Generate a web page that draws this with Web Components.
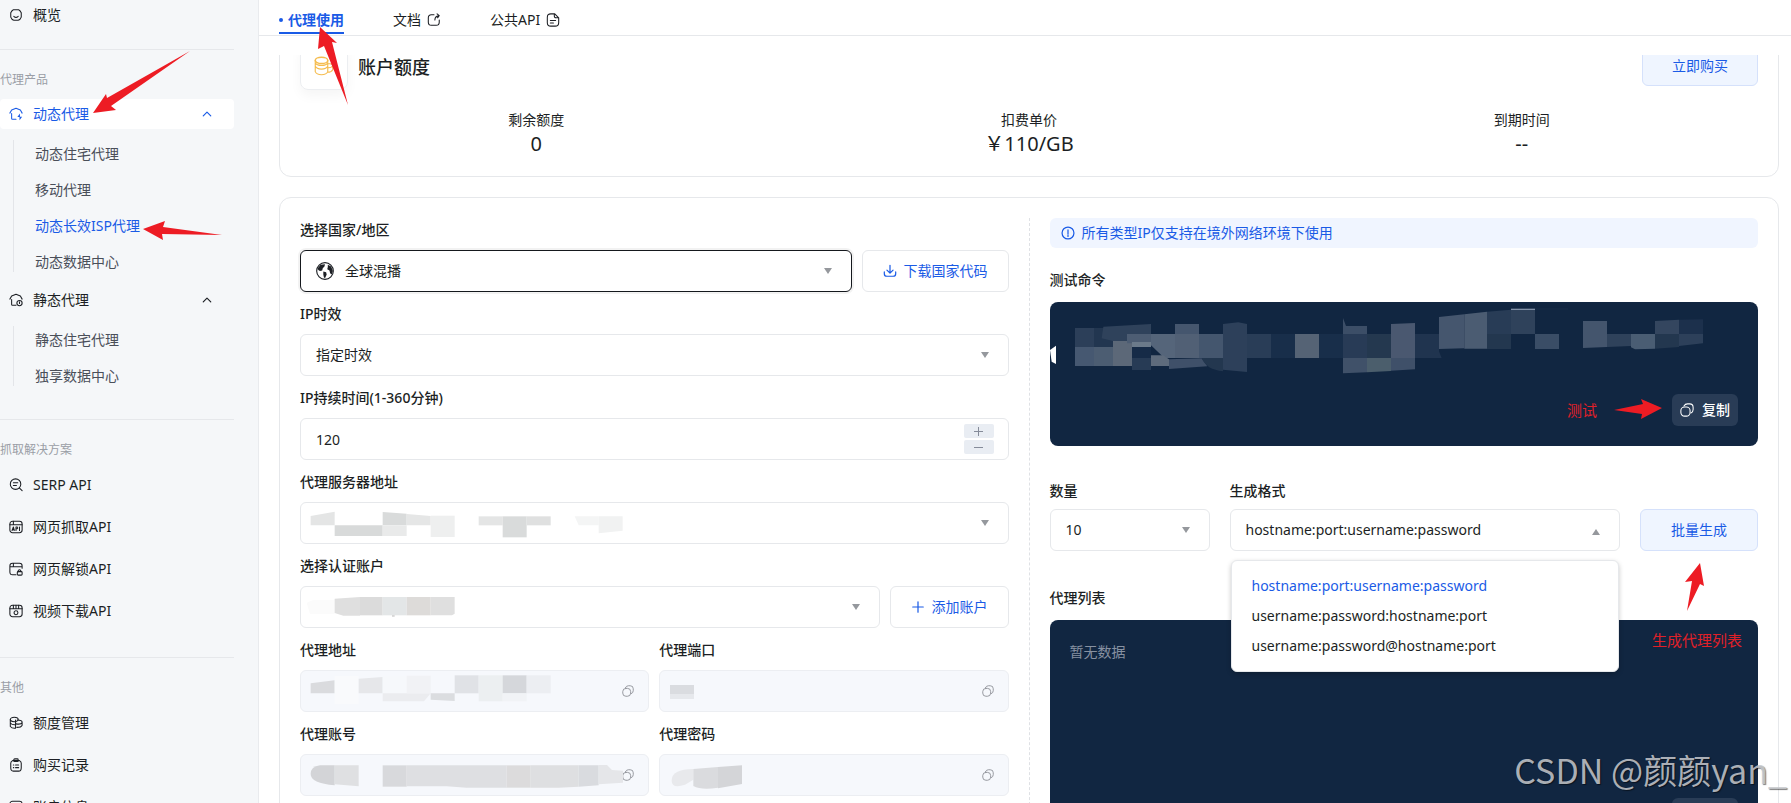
<!DOCTYPE html>
<html lang="zh-CN">
<head>
<meta charset="utf-8">
<meta name="viewport" content="width=device-width, initial-scale=1">
<title>动态长效ISP代理</title>
<style>
  html {
    --blue: #1a5be6;
    --text: #1c1f24;
    --muted: #9a9ea6;
    --line: #e6e8eb;
    --panel: #112641;
    --note: #e02028;
  }

  body {
    margin: 0;
    color: var(--text);
    font: 14px/24px "Noto Sans", "Noto Sans CJK SC", sans-serif;
    overflow: hidden;
  }
</style>
</head>
<body>
<app-shell>
  <side-nav slot="nav">
    <nav-section compact>
      <nav-item icon="home">概览</nav-item>
    </nav-section>
    <nav-section caption="代理产品">
      <nav-group icon="dynamic" heading="动态代理" active>
        <nav-item sub>动态住宅代理</nav-item>
        <nav-item sub>移动代理</nav-item>
        <nav-item sub current>动态长效ISP代理</nav-item>
        <nav-item sub>动态数据中心</nav-item>
      </nav-group>
      <nav-group icon="static" heading="静态代理">
        <nav-item sub>静态住宅代理</nav-item>
        <nav-item sub>独享数据中心</nav-item>
      </nav-group>
    </nav-section>
    <nav-section caption="抓取解决方案">
      <nav-item icon="serp">SERP API</nav-item>
      <nav-item icon="scrape">网页抓取API</nav-item>
      <nav-item icon="unlock">网页解锁API</nav-item>
      <nav-item icon="video">视频下载API</nav-item>
    </nav-section>
    <nav-section caption="其他">
      <nav-item icon="coins">额度管理</nav-item>
      <nav-item icon="order">购买记录</nav-item>
      <nav-item icon="user">账户信息</nav-item>
    </nav-section>
  </side-nav>
  <tab-bar slot="tabs"></tab-bar>
  <quota-card>
    <quota-stat label="剩余额度">0</quota-stat>
    <quota-stat label="扣费单价">￥110/GB</quota-stat>
    <quota-stat label="到期时间">--</quota-stat>
  </quota-card>
  <work-card>
    <field-select label="选择国家/地区" value="全球混播" icon="globe" focused>
      <ui-button slot="aside" kind="plain" icon="download">下载国家代码</ui-button>
    </field-select>
    <field-select label="IP时效" value="指定时效"></field-select>
    <field-number label="IP持续时间(1-360分钟)" value="120"></field-number>
    <field-select label="代理服务器地址" mask="server"></field-select>
    <field-select label="选择认证账户" mask="account">
      <ui-button slot="aside" kind="plain" icon="plus">添加账户</ui-button>
    </field-select>
    <field-pair>
      <field-copy label="代理地址" mask="host"></field-copy>
      <field-copy label="代理端口" mask="port"></field-copy>
      <field-copy label="代理账号" mask="user"></field-copy>
      <field-copy label="代理密码" mask="pass"></field-copy>
    </field-pair>
    <info-banner slot="right">所有类型IP仅支持在境外网络环境下使用</info-banner>
    <code-panel slot="right" heading="测试命令" masked>
      <hand-note slot="note">测试</hand-note>
    </code-panel>
    <generate-row slot="right"></generate-row>
    <code-panel slot="right" heading="代理列表" tall empty="暂无数据">
      <hand-note slot="note" corner>生成代理列表</hand-note>
    </code-panel>
  </work-card>
</app-shell>
<hand-arrows></hand-arrows>
<water-mark>CSDN @颜颜yan_</water-mark>

<script>
const icons = {
  home: '<path d="M5 2h6q1.500.5 3 3.500v5q-1 3-3.500 3.500h-5Q3 13.500 2 10.500v-5Q3.500 2.500 5 2z"/><path d="M5.500 9.500q2.500 2.500 5 0"/>',
  dynamic: '<path d="M1 7l2-3.500L8 1.500l5 2L15 7M3 7.500V13q0 1 1 1h4"/><path d="M12.500 7.500l-3 4h2.500v3.500l3-4h-2.500z" fill="currentColor" stroke="none"/>',
  static: '<path d="M1 7l2-3.500L8 1.500l5 2L15 7M3 7.500V13q0 1 1 1h4"/><circle cx="12" cy="11.500" r="3"/><path d="M12 10v2"/>',
  serp: '<circle cx="7.500" cy="7" r="6"/><path d="M12 11.500l3 3M5 5.500h5M5 8.500h3.500"/>',
  scrape: '<rect x="1" y="1.500" width="14" height="13" rx="3"/><path d="M1 5.500h14M5 1.500v4"/><path d="M3.500 12l1.500-4 1 4M4 11h2M8 12V8h1.500q1 1 0 2H8M12 8v4" stroke-width="1.200"/>',
  unlock: '<path d="M8 14.500H4q-3 0-3-3v-7q0-3 3-3h8q3 0 3 3V7M1 5.500h14M5 1.500v4"/><rect x="9.500" y="11" width="5.500" height="4" rx="1"/><path d="M10.500 11v-1q1.500-2.500 3 0"/>',
  video: '<rect x="1" y="1.500" width="14" height="13" rx="3"/><path d="M1 5.500h14M5 1.500v4M8 1.500v4M11 1.500v4"/><circle cx="8" cy="10" r="2.200"/>',
  coins: '<ellipse cx="6" cy="4" rx="4.500" ry="2.500"/><path d="M1.500 4v8q2 2.500 6 2V4.500M1.500 8q2 2.500 6 2"/><path d="M9.500 4.500q5.500 0 5.500 2.500v3.500q-1 2.500-6 2.500M8 9q6 1 7-1.500"/>',
  coinsWide: '<ellipse cx="6" cy="3.500" rx="5" ry="2.500"/><path d="M1 3.500v9q1 2.500 5 2.500t5-2.500v-9M1 8q1 2.500 5 2.500T11 8M1 5.500q1 2 5 2t5-2M11 6q4 0 4 2v3q-1 2-4 2M11 9.500q3 0 4-1.500" stroke-width=".9"/>',
  order: '<path d="M4 3h8q2 1 2 3v5q0 4-3 4H5q-3 0-3-4V6q0-2 2-3z"/><rect x="5.500" y="1" width="5" height="3" rx="1"/><path d="M5 8h.5M7.500 8H11M5 11h.5M7.500 11H11"/>',
  user: '<rect x="1" y="1.500" width="14" height="13" rx="3"/><path d="M4 6h8M4 10h5"/>',
  share: '<path d="M8 2H5Q1.500 2 1.500 5.500v5Q1.500 14 5 14h5.500q3.500 0 3.500-3.500V8"/><path d="M9 8q0-4.500 5-5M11.500 1l2.500 2-2 2.500"/>',
  doc: '<path d="M10 1H5.500Q1.500 1 1.500 5v6q0 4 4 4h5q4 0 4-4V5.500zM9.500 1v2.500q0 2 2 2h3"/><path d="M5 8.500h6M5 11.500h3.500"/>',
  up: '<path d="M3 10.500l5-5 5 5" stroke-width="1.600"/>',
  download: '<path d="M8 1.500v8.500M4.500 7L8 10.500 11.500 7M1.500 9v2q0 3 3 3h7q3 0 3-3V9" stroke-width="1.400"/>',
  plus: '<path d="M8 2v12M2 8h12" stroke-width="1.400"/>',
  info: '<circle cx="8" cy="8" r="6.800" stroke-width="1.400"/><path d="M8 4.500V9M8 10.500v1.500" stroke-width="1.400"/>',
  copy: '<rect x="1" y="4.500" width="10.500" height="10.500" rx="4.200"/><path d="M4.500 3.500Q6 1 8.500 1H11q4 0 4 4v2.500q0 3-2.500 4"/>',
  globe: '<circle cx="8" cy="8" r="7.400" fill="#fff" stroke-width="1"/><path d="M1.500 5.500L4 2.500l4-.5-.5 2L6 5.500l-.5 2L3.500 8 2 7zM6.500 8.500l2.500.5.5 2-1.500 3.500-1-1-.5-2.500zM10.500 2.500l3 1.500 1.500 4-1 3-1.500-1-.5-2.500-2-1 .5-2z" fill="currentColor" stroke="none"/>',
};

// Pixelated patches over private values, keyed by field. Units are thirds of a pixel.
const masks = {
  server: '<path d="M32 42l72-13v41H32z" fill="#e4e5e5"/><path d="M104 70h144v32H104z" fill="#d8dada"/><path d="M248 30l72 5v35h-72z" fill="#d9dbdb"/><path d="M248 70h72v32h-72z" fill="#e9eaea"/><path d="M320 36l72 6v28h-72z" fill="#e5e6e6"/><path d="M392 41h72v64h-72z" fill="#eeefef"/><path d="M536 43h72v27h-72z" fill="#e4e5e5"/><path d="M608 43h72v63h-72z" fill="#d9dbdb"/><path d="M680 43h72v27h-72z" fill="#dfe0e0"/><path d="M824 43h72v27h-60z" fill="#f4f5f5"/><path d="M896 43h72v43l-72 8z" fill="#f1f2f2"/>',
  account: '<path d="M20 50l20-8h64v42H30z" fill="#fbfbfb"/><path d="M104 38l76-5v56h-50l-26-8z" fill="#dfdfdf"/><path d="M180 33h68v55h-68z" fill="#dbdbdb"/><path d="M248 33h72v55h-72z" fill="#e3e6e7"/><path d="M320 33h72v55h-72z" fill="#dddbd9"/><path d="M392 33h72v50l-8 5h-64z" fill="#dfdfdf"/><path d="M276 89h8v2h-8z" fill="#999"/>',
  host: '<path d="M32 40l72-9v39H32z" fill="#dadbde"/><path d="M104 18h72v84h-72z" fill="#f9fafc"/><path d="M176 26l72-5v49h-72z" fill="#e6e7ea"/><path d="M248 18h72v52h-72z" fill="#f6f8fb"/><path d="M248 70h144l-20 24H248z" fill="#ebecef"/><path d="M320 17h72v53h-72z" fill="#f1f2f5"/><path d="M392 70h72v23l-72-4z" fill="#dbdde0"/><path d="M464 16h72v54h-72z" fill="#e0e2e6"/><path d="M536 16h72v78h-72z" fill="#eceff1"/><path d="M608 16h72v54h-72z" fill="#d5d7db"/><path d="M608 70h72v24h-72z" fill="#f1f3f6"/><path d="M680 16h72v54h-72z" fill="#eceef2"/>',
  port: '<path d="M33 45h72v27H33z" fill="#dadce0"/><path d="M33 72h72v15H33z" fill="#e6e8ec"/>',
  user: '<path d="M104 34H60Q32 38 32 60q0 28 72 34z" fill="#d3d4d7"/><path d="M104 34h72v63l-72-6z" fill="#dfe0e2"/><path d="M248 34h72v64h-72z" fill="#d8d9dc"/><path d="M320 34h300v67H500l-60-4H320z" fill="#dedfe2"/><path d="M620 34h72v67h-72z" fill="#dcdbdc"/><path d="M692 34h144v64l-60 3h-84z" fill="#dedfe1"/><path d="M836 34h60v60l-60 4z" fill="#d9dbdf"/><path d="M896 33h25l15 15 33 2v36l-73 5z" fill="#e5e6e9"/>',
  pass: '<path d="M103 45q-65 0-65 35 0 25 40 12l25-15z" fill="#e8e9ec"/><path d="M103 45l74-6v62q-50 8-74-5z" fill="#dadbde"/><path d="M177 39l72-5v56l-72 13z" fill="#d4d5d8"/>',
  command: '<path d="M0 144L18 131v55L5 179z" fill="#fff"/><path d="M75 78h57v57H75z" fill="#2c3f59"/><path d="M132 78h99v57h-99z" fill="#223650"/><path d="M160 74l143-8v40h-72v12l-42-1-34-8z" fill="#2f425b"/><path d="M75 135h57v57H75z" fill="#465871"/><path d="M132 135h57v57h-57z" fill="#4c5d72"/><path d="M189 117h57v75h-57z" fill="#5c6878"/><path d="M231 96h72v28h-72z" fill="#4d5d73"/><path d="M246 120h57v15h-57z" fill="#6b7a8a"/><path d="M246 135h57v33h-57z" fill="#162b47"/><path d="M246 168h57v36h-57z" fill="#273b55"/><path d="M303 96h72v72h-32l-40-38z" fill="#55657a"/><path d="M375 66h72v30h-72z" fill="#45566e"/><path d="M375 96h72v72h-72z" fill="#516075"/><path d="M447 96h72v72h-72z" fill="#44566e"/><path d="M303 160h36l18 12v20h-54z" fill="#5e6b7c"/><path d="M357 172l98-3 17 24-115 8z" fill="#3f5069"/><path d="M455 168h64v40q-50-5-64-40z" fill="#23374f"/><path d="M519 66l46-5 26 5v144l-72-7z" fill="#2d405a"/><path d="M591 96h72v72h-72z" fill="#293d57"/><path d="M663 96h216v72H663z" fill="#182e4a"/><path d="M735 96h72v72h-72z" fill="#556375"/><path d="M879 48l9 24h63v24h-72z" fill="#3c4e67"/><path d="M879 96h72v72h-72z" fill="#283b56"/><path d="M951 96h72v72h-72z" fill="#24384f"/><path d="M879 168h72v43l-72 3z" fill="#405169"/><path d="M951 168h72v39l-72 4z" fill="#4b5e6c"/><path d="M1023 66l72-3v105h-72z" fill="#4a5870"/><path d="M1023 168h72v34l-72 4z" fill="#3f5069"/><path d="M1095 96h72v52l8 20h-80z" fill="#20344f"/><path d="M1167 45l76-8v102l-76 2z" fill="#45566e"/><path d="M1243 37l68-8v111h-68z" fill="#4b5c72"/><path d="M1311 29l72-6v73h-72z" fill="#283c56"/><path d="M1311 96h72v45h-72z" fill="#23374f"/><path d="M1383 23h72v73h-72z" fill="#2f425b"/><path d="M1383 20h72v3h-72z" fill="#a9b5c8"/><path d="M1455 20h100v2h-100z" fill="#20344f"/><path d="M1455 96h72v45h-72z" fill="#3a4d66"/><path d="M1599 57h72v78l-72 3z" fill="#44556d"/><path d="M1671 96h72v36l-72 3z" fill="#2f425b"/><path d="M1743 96h72v44l-60 2-12-6z" fill="#4a5d73"/><path d="M1815 57l72-4v43h-72z" fill="#34465f"/><path d="M1815 96h72v39l-72 5z" fill="#23374f"/><path d="M1887 53l72-1v44h-72z" fill="#1c304c"/><path d="M1887 96h72v28l-72 8z" fill="#2d405a"/>',
};

const shared = `
  * { box-sizing: border-box; }
  button, input, select { font: inherit; color: inherit; margin: 0; }
  a { color: inherit; text-decoration: none; }
`;

class BaseElement extends HTMLElement {
  constructor() {
    super();
    this.attachShadow({ mode: 'open' });
  }

  connectedCallback() {
    const template = document.createElement('template');
    template.innerHTML = `<style>${shared}${this.css()}</style>${this.html()}`;
    this.shadowRoot.replaceChildren(template.content.cloneNode(true));
  }

  css() { return ''; }

  html() { return '<slot></slot>'; }

  attr(name) { return this.getAttribute(name) || ''; }
}

class UiIcon extends BaseElement {
  css() {
    return `
      :host { display: block; flex: none; width: 14px; height: 14px; }
      svg { display: block; width: 100%; height: 100%; }
    `;
  }

  html() {
    return `<svg viewBox="0 0 16 16" fill="none" stroke="currentColor" stroke-width="1.200" stroke-linecap="round" stroke-linejoin="round" aria-hidden="true">${icons[this.attr('name')]}</svg>`;
  }
}

class PixelMask extends BaseElement {
  css() {
    return `
      :host { position: absolute; inset: 0; overflow: hidden; pointer-events: none; }
      svg { display: block; width: 708px; height: 144px; }
    `;
  }

  html() {
    return `<svg viewBox="0 0 2124 432" aria-hidden="true">${masks[this.attr('name')]}</svg>`;
  }
}

class AppShell extends BaseElement {
  css() {
    return `
      :host { display: grid; grid-template-columns: 259px minmax(0, 1fr); height: 100vh; overflow: hidden; }
      .page { display: flex; flex-direction: column; min-width: 0; min-height: 0; }
      .scroll { flex: 1; min-height: 0; margin-top: 19px; padding: 0 12px 0 20px; overflow: hidden; }
      .content { display: flex; flex-direction: column; gap: 20px; margin-top: -34px; }
    `;
  }

  html() {
    return `
      <slot name="nav"></slot>
      <div class="page">
        <slot name="tabs"></slot>
        <main class="scroll"><div class="content"><slot></slot></div></main>
      </div>
    `;
  }
}

class SideNav extends BaseElement {
  css() {
    return `
      :host { display: block; min-height: 0; padding-right: 24px; background: #f5f7f9; border-right: 1px solid #e9ebee; overflow: hidden; }
      nav { margin-top: -6px; }
    `;
  }

  html() { return '<nav><slot></slot></nav>'; }
}

class NavSection extends BaseElement {
  css() {
    return `
      :host { display: block; padding-bottom: 25px; border-bottom: 1px solid var(--line); }
      :host([compact]) { padding-bottom: 13px; }
      h2 { margin: 21px 0 5px; color: var(--muted); font-size: 12px; font-weight: 400; line-height: 18px; }
    `;
  }

  html() {
    const caption = this.attr('caption');
    return `${caption ? `<h2>${caption}</h2>` : ''}<slot></slot>`;
  }
}

class NavItem extends BaseElement {
  css() {
    return `
      :host { display: block; }
      a { display: flex; align-items: center; gap: 10px; height: 42px; padding-left: 9px; }
      :host([sub]) a { height: 36px; padding-left: 35px; color: #4a4f59; }
      :host([current]) a { color: var(--blue); }
    `;
  }

  html() {
    const icon = this.attr('icon');
    return `<a href="#">${icon ? `<ui-icon name="${icon}"></ui-icon>` : ''}<slot></slot></a>`;
  }
}

class NavGroup extends BaseElement {
  css() {
    return `
      :host { display: block; padding-top: 5px; }
      button { display: flex; align-items: center; gap: 10px; width: 100%; height: 30px; padding: 0 21px 0 9px; border: 0; border-radius: 4px; background: none; text-align: left; }
      span { flex: 1; }
      .arrow { width: 12px; height: 12px; }
      :host([active]) button { color: var(--blue); background: #fff; }
      .items { padding-top: 7px; background: linear-gradient(#e3e5e9, #e3e5e9) 13px 11px / 1px calc(100% - 19px) no-repeat; }
    `;
  }

  html() {
    return `
      <button type="button" aria-expanded="true">
        <ui-icon name="${this.attr('icon')}"></ui-icon>
        <span>${this.attr('heading')}</span>
        <ui-icon class="arrow" name="up"></ui-icon>
      </button>
      <div class="items"><slot></slot></div>
    `;
  }
}

class TabBar extends BaseElement {
  css() {
    return `
      :host { display: flex; flex: none; gap: 49px; height: 35px; padding-left: 20px; border-bottom: 1px solid var(--line); }
      a { display: flex; align-items: center; gap: 6px; height: 34px; padding-top: 6px; }
      .on { gap: 5px; color: var(--blue); font-weight: 700; border-bottom: 2px solid; padding-top: 8px; }
      .on::before { content: ""; width: 4px; height: 4px; border-radius: 50%; background: currentColor; }
    `;
  }

  html() {
    return `
      <a class="on" href="#use">代理使用</a>
      <a href="#docs">文档<ui-icon name="share"></ui-icon></a>
      <a href="#api">公共API<ui-icon name="doc"></ui-icon></a>
    `;
  }
}

class UiButton extends BaseElement {
  css() {
    return `
      :host { display: block; flex: none; }
      button { display: flex; align-items: center; justify-content: center; gap: 7px; width: 100%; height: var(--button-height, 42px); padding: 0 20px; color: var(--blue); border: 1px solid #d5e1fb; border-radius: 6px; background: #eff5ff; white-space: nowrap; cursor: pointer; }
      :host([kind="plain"]) button { border-color: var(--line); background: #fff; }
      :host([kind="dark"]) button { height: 32px; padding: 0 8px; gap: 8px; color: #fff; font-weight: 500; border: 0; background: #293c56; }
    `;
  }

  html() {
    const icon = this.attr('icon');
    return `<button type="button">${icon ? `<ui-icon name="${icon}"></ui-icon>` : ''}<slot></slot></button>`;
  }
}

class QuotaCard extends BaseElement {
  css() {
    return `
      :host { display: block; padding: 20px 0; border: 1px solid var(--line); border-radius: 12px; clip-path: inset(34px 0 0 0); }
      header { display: flex; align-items: center; gap: 10px; height: 48px; padding: 0 20px; }
      .badge { display: grid; place-items: center; width: 48px; height: 48px; color: #f5bc4e; border: 1px solid #eceef1; border-radius: 8px; box-shadow: 0 6px 12px #0000000a; }
      .badge ui-icon { width: 20px; height: 20px; }
      h1 { flex: 1; margin: 0; padding-top: 2px; font-size: 18px; font-weight: 500; }
      ui-button { --button-height: 40px; width: 116px; }
      .stats { display: grid; grid-template-columns: repeat(3, 1fr); margin-top: 18px; padding: 0 10px; }
    `;
  }

  html() {
    return `
      <header>
        <div class="badge"><ui-icon name="coinsWide"></ui-icon></div>
        <h1>账户额度</h1>
        <ui-button>立即购买</ui-button>
      </header>
      <div class="stats"><slot></slot></div>
    `;
  }
}

class QuotaStat extends BaseElement {
  css() {
    return `
      :host { display: block; text-align: center; }
      strong { display: block; font-size: 20px; font-weight: 400; }
    `;
  }

  html() { return `${this.attr('label')}<strong><slot></slot></strong>`; }
}

class WorkCard extends BaseElement {
  css() {
    return `
      :host { display: grid; grid-template-columns: minmax(0, 1fr) 41px minmax(0, 1fr); padding: 20px; border: 1px solid var(--line); border-radius: 12px; }
      .left { display: flex; flex-direction: column; gap: 10px; }
      .rule { justify-self: center; border-left: 1px dashed #dfe1e5; }
    `;
  }

  html() {
    return `
      <div class="left"><slot></slot></div>
      <div class="rule"></div>
      <div class="right"><slot name="right"></slot></div>
    `;
  }
}

const fieldCss = `
  :host { display: block; min-width: 0; }
  label { display: block; margin-bottom: var(--label-gap, 8px); font-weight: 500; }
  .row { display: flex; gap: 10px; }
  .box { position: relative; flex: 1; min-width: 0; }
  select, input { display: block; width: 100%; height: 42px; padding: 0 15px; border: 1px solid var(--line); border-radius: 6px; background: #fff; outline: 0; appearance: none; }
`;

class FieldSelect extends BaseElement {
  css() {
    return `${fieldCss}
      .box::after { content: ""; position: absolute; top: 18px; right: 20px; border: 4px solid transparent; border-top: 6px solid #95989d; border-bottom: 0; pointer-events: none; }
      :host([open]) .box::after { border-top: 0; border-bottom: 6px solid #95989d; top: 20px; }
      :host([icon]) select { padding-left: 44px; }
      :host([focused]) select { border-color: #15181d; box-shadow: 0 0 0 2px #0000000d; }
      .box > ui-icon { position: absolute; top: 12px; left: 16px; width: 18px; height: 18px; }
    `;
  }

  html() {
    const icon = this.attr('icon');
    const mask = this.attr('mask');
    return `
      <label for="control">${this.attr('label')}</label>
      <div class="row">
        <div class="box">
          <select id="control"><option>${this.attr('value')}</option></select>
          ${icon ? `<ui-icon name="${icon}"></ui-icon>` : ''}
          ${mask ? `<pixel-mask name="${mask}"></pixel-mask>` : ''}
          <slot name="menu"></slot>
        </div>
        <slot name="aside"></slot>
      </div>
    `;
  }
}

class FieldNumber extends BaseElement {
  css() {
    return `${fieldCss}
      input::-webkit-inner-spin-button { appearance: none; }
      .steps { position: absolute; top: 6px; right: 15px; display: grid; gap: 2px; }
      button { display: grid; place-items: center; width: 30px; height: 14px; padding: 0; color: #858b99; border: 0; border-radius: 2px; background: #e9edf3; }
      svg { width: 9px; height: 9px; }
    `;
  }

  html() {
    return `
      <label for="control">${this.attr('label')}</label>
      <div class="box">
        <input id="control" type="number" min="1" max="360" value="${this.attr('value')}">
        <div class="steps">
          <button type="button" aria-label="+"><svg viewBox="0 0 9 9" stroke="currentColor"><path d="M0 4.500h9M4.500 0v9"/></svg></button>
          <button type="button" aria-label="-"><svg viewBox="0 0 9 9" stroke="currentColor"><path d="M0 4.500h9"/></svg></button>
        </div>
      </div>
    `;
  }
}

class FieldCopy extends BaseElement {
  css() {
    return `${fieldCss}
      input { background: #f6f8fc; border-color: #eceef2; }
      button { position: absolute; top: 10px; right: 10px; display: grid; place-items: center; width: 22px; height: 22px; padding: 0; color: #8d9096; border: 0; background: none; }
      ui-icon { width: 12px; height: 12px; }
    `;
  }

  html() {
    return `
      <label for="control">${this.attr('label')}</label>
      <div class="box">
        <input id="control" type="text" readonly>
        <button type="button" aria-label="复制"><ui-icon name="copy"></ui-icon></button>
        <pixel-mask name="${this.attr('mask')}"></pixel-mask>
      </div>
    `;
  }
}

class FieldPair extends BaseElement {
  css() {
    return ':host { display: grid; grid-template-columns: 1fr 1fr; gap: 10px; }';
  }
}

class InfoBanner extends BaseElement {
  css() {
    return ':host { display: flex; align-items: center; gap: 7px; height: 30px; margin-bottom: 20px; padding: 0 11px; color: var(--blue); border-radius: 6px; background: #f0f5ff; }';
  }

  html() { return '<ui-icon name="info"></ui-icon><slot></slot>'; }
}

class CodePanel extends BaseElement {
  css() {
    return `
      :host { display: block; }
      h2 { margin: 0 0 10px; font-size: 14px; font-weight: 500; line-height: 24px; }
      .panel { position: relative; display: flex; flex-direction: column; min-height: 144px; padding: 20px; border-radius: 8px; background: var(--panel); overflow: hidden; }
      :host([tall]) .panel { min-height: 230px; }
      p { margin: 0; color: #8791a1; }
      footer { display: flex; align-items: center; justify-content: flex-end; margin-top: auto; }
    `;
  }

  html() {
    return `
      <h2>${this.attr('heading')}</h2>
      <div class="panel">
        ${this.hasAttribute('masked') ? '<pixel-mask name="command"></pixel-mask>' : ''}
        <p>${this.attr('empty')}</p>
        <footer>
          <slot name="note"></slot>
          <ui-button kind="dark" icon="copy">复制</ui-button>
        </footer>
      </div>
    `;
  }
}

class HandNote extends BaseElement {
  css() {
    return `
      :host { margin-right: 75px; color: var(--note); font-size: 15px; }
      :host([corner]) { position: absolute; top: 8px; right: 16px; margin: 0; }
    `;
  }
}

class FormatMenu extends BaseElement {
  css() {
    return `
      :host { position: absolute; z-index: 2; top: 51px; left: 1px; right: 1px; }
      ul { margin: 0; padding: 10px 0; list-style: none; border: 1px solid var(--line); border-radius: 6px; background: #fff; box-shadow: 0 2px 5px #00000038; }
      button { display: block; width: 100%; height: 30px; padding: 0 20px; border: 0; background: none; text-align: left; }
      .on { color: var(--blue); }
    `;
  }

  html() {
    const formats = [
      'hostname:port:username:password',
      'username:password:hostname:port',
      'username:password@hostname:port',
    ];
    return `<ul>${formats.map((format, i) => `<li><button type="button"${i ? '' : ' class="on"'}>${format}</button></li>`).join('')}</ul>`;
  }
}

class GenerateRow extends BaseElement {
  css() {
    return `
      :host { --label-gap: 6px; display: grid; grid-template-columns: 160px 1fr 118px; align-items: end; gap: 20px; margin: 33px 0 35px; }
    `;
  }

  html() {
    return `
      <field-select label="数量" value="10"></field-select>
      <field-select label="生成格式" value="hostname:port:username:password" open>
        <format-menu slot="menu"></format-menu>
      </field-select>
      <ui-button>批量生成</ui-button>
    `;
  }
}

// Red pointers drawn over the page
class HandArrows extends BaseElement {
  css() {
    return `
      :host { position: absolute; inset: 0; overflow: hidden; pointer-events: none; }
      svg { position: absolute; top: 0; left: 0; width: 360px; height: 250px; fill: #ed1c24; }
      .right { top: 390px; right: 80px; left: auto; width: 111px; height: 230px; }
    `;
  }

  html() {
    return `
      <svg viewBox="0 0 360 250" aria-hidden="true">
        <path d="M93 113l13-19 1 4 83-47-79 55 5 4z"/>
        <path d="M143 229l22-8-2 6 59 8-60-1 1 6z"/>
        <path d="M320 27l17 16-5-1 16 63-24-59-6 3z"/>
      </svg>
      <svg class="right" viewBox="1600 390 111 230" aria-hidden="true">
        <path d="M1662 408l-21-9 2 5-29 6 28 4-1 5z"/>
        <path d="M1700 563l4 23-4-2-13 27 5-30-7 1z"/>
      </svg>
    `;
  }
}

class WaterMark extends BaseElement {
  css() {
    return ':host { position: absolute; right: 4px; bottom: 9px; color: #c9cbcfd9; font-size: 34px; line-height: 48px; font-family: "Noto Sans CJK SC", sans-serif; text-shadow: 1px 1px 1px #00000080; pointer-events: none; }';
  }
}

customElements.define('ui-icon', UiIcon);
customElements.define('pixel-mask', PixelMask);
customElements.define('ui-button', UiButton);
customElements.define('app-shell', AppShell);
customElements.define('side-nav', SideNav);
customElements.define('nav-section', NavSection);
customElements.define('nav-item', NavItem);
customElements.define('nav-group', NavGroup);
customElements.define('tab-bar', TabBar);
customElements.define('quota-card', QuotaCard);
customElements.define('quota-stat', QuotaStat);
customElements.define('work-card', WorkCard);
customElements.define('field-select', FieldSelect);
customElements.define('field-number', FieldNumber);
customElements.define('field-copy', FieldCopy);
customElements.define('field-pair', FieldPair);
customElements.define('info-banner', InfoBanner);
customElements.define('code-panel', CodePanel);
customElements.define('hand-note', HandNote);
customElements.define('format-menu', FormatMenu);
customElements.define('generate-row', GenerateRow);
customElements.define('hand-arrows', HandArrows);
customElements.define('water-mark', WaterMark);
</script>
</body>
</html>
